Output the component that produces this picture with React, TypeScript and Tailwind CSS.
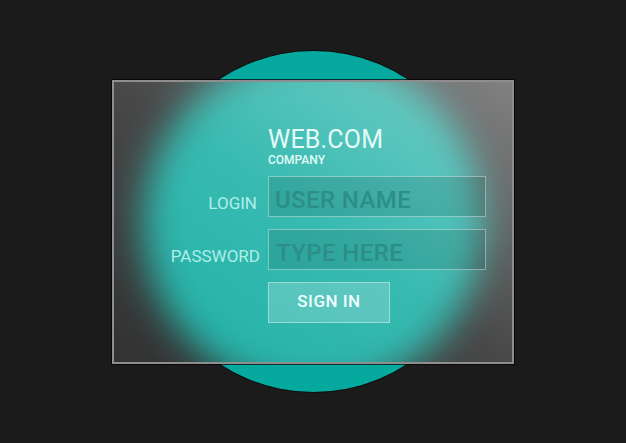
import React from 'react';

const font = { fontFamily: 'Roboto, "Liberation Sans", sans-serif' };

export default function App() {
  return (
    <div
      className="relative flex h-[443px] w-[626px] items-center justify-center overflow-hidden bg-[#1b1b1b]"
      style={font}
    >
      {/* teal disc behind the glass card */}
      <div className="absolute left-[143px] top-[51px] h-[341px] w-[341px] rounded-full bg-[#06a99d] shadow-[0_0_0_1px_rgba(0,0,0,0.5)]" />

      {/* glass card */}
      <div className="relative flex h-[284px] w-[402px] flex-col overflow-hidden border-2 border-[#8e8e8e] bg-[#1b1b1b] pl-[154px] pt-[45px] shadow-[0_0_0_1px_rgba(0,0,0,0.7)]">
        {/* frosted view of the disc */}
        <div className="absolute left-[29px] top-[-30px] h-[341px] w-[341px] rounded-full bg-[#06a99d] blur-[18px]" />
        <div className="absolute inset-0 bg-linear-to-tr from-white/10 via-white/20 to-white/45" />

        <div className="relative flex flex-col">
          <div className="text-[25px] leading-[26px] tracking-[0.2px] text-[#e4fbf8]">WEB.COM</div>
          <div className="mt-[1px] text-[12px] leading-[12px] font-medium text-[#e4fbf8]">COMPANY</div>
        </div>

        <div className="relative mt-[10px] grid grid-cols-[218px] gap-y-[12px]">
          <div className="relative flex h-[41px] items-end border border-white/40 bg-black/10 pb-[2px] pl-[6px]">
            <span className="absolute right-[228px] bottom-[3px] text-[17px] leading-[20px] text-[#b0eee8]">LOGIN</span>
            <span className="text-[24px] leading-[28px] font-medium tracking-[0.4px] text-[#2c8e86]">USER NAME</span>
          </div>
          <div className="relative flex h-[41px] items-end border border-white/40 bg-black/10 pb-[2px] pl-[7px]">
            <span className="absolute right-[225px] bottom-[3px] text-[17px] leading-[20px] text-[#b0eee8]">PASSWORD</span>
            <span className="text-[24px] leading-[28px] font-medium tracking-[0.4px] text-[#2c8e86]">TYPE HERE</span>
          </div>
        </div>

        <button className="relative mt-[12px] flex h-[41px] w-[122px] items-center justify-center border border-white/40 bg-white/20 text-[17px] font-medium tracking-[0.5px] text-[#effffd]">
          SIGN IN
        </button>
      </div>
    </div>
  );
}
